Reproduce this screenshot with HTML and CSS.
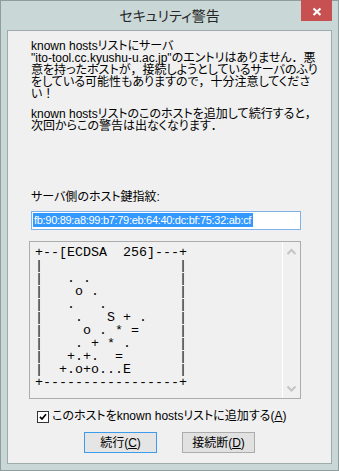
FILE: index.html
```html
<!DOCTYPE html>
<html lang="ja">
<head>
<meta charset="utf-8">
<title>セキュリティ警告</title>
<link rel="stylesheet" href="styles.css">
</head>
<body>
<div class="window">
  <div class="titlebar">
    <div class="title">セキュリティ警告</div>
    <div class="close">
      <svg width="31" height="21" viewBox="0 0 31 21"><path d="M12.5 8.5 L19.5 15 M19.5 8.5 L12.5 15" stroke="#fff" stroke-width="2.2" fill="none"/></svg>
    </div>
  </div>
  <div class="client">
    <div class="msg">
      <div class="para">
        <span class="ln">known hostsリストにサーバ</span>
        <span class="ln">"ito-tool.cc.kyushu-u.ac.jp"のエントリはありません<span class="fw">．</span>悪</span>
        <span class="ln">意を持ったホストが<span class="fw">，</span>接続しようとしているサーバのふり</span>
        <span class="ln">をしている可能性もありますので<span class="fw">，</span>十分注意してくださ</span>
        <span class="ln">い<span class="fw">！</span></span>
      </div>
      <div class="para second">
        <span class="ln">known hostsリストのこのホストを追加して続行すると<span class="fw">，</span></span>
        <span class="ln">次回からこの警告は出なくなります<span class="fw">．</span></span>
      </div>
    </div>
    <div class="label">サーバ側のホスト鍵指紋:</div>
    <div class="fp"><span class="sel">fb:90:89:a8:99:b7:79:eb:64:40:dc:bf:75:32:ab:cf</span></div>
    <div class="art">
<pre class="art-text">+--[ECDSA  256]---+
|                 |
|   . .           |
|    o .          |
|   .   .         |
|    .   S + .    |
|     o . * =     |
|    . + * .      |
|   +.+.  =       |
|  +.o+o...E      |
+-----------------+</pre>
      <div class="sb">
        <svg class="arrow" width="17" height="17" viewBox="0 0 17 17"><path d="M4.5 12 L8.5 8 L12.5 12" stroke="#c4c4c4" stroke-width="2" fill="none"/></svg>
        <svg class="arrow" width="17" height="17" viewBox="0 0 17 17"><path d="M4.5 5.5 L8.5 9.5 L12.5 5.5" stroke="#c4c4c4" stroke-width="2" fill="none"/></svg>
      </div>
    </div>
    <label class="check">
      <span class="box"><svg width="12" height="12" viewBox="0 0 12 12"><path d="M2.3 5.8 L4.8 8.4 L9.6 2.6" stroke="#000" stroke-width="2" fill="none"/></svg></span>
      <span class="check-text">このホストをknown hostsリストに追加する(<u>A</u>)</span>
    </label>
    <div class="buttons">
      <div class="btn default">続行(<u>C</u>)</div>
      <div class="btn">接続断(<u>D</u>)</div>
    </div>
  </div>
</div>
</body>
</html>
```

FILE: styles.css
```css
html, body {
  margin: 0;
  padding: 0;
}
body {
  width: 339px;
  height: 471px;
  overflow: hidden;
  font-family: "Liberation Sans", "Noto Sans CJK JP", sans-serif;
  font-size: 12px;
  color: #000;
  background: #c9d7d7;
}
.window {
  box-sizing: border-box;
  width: 339px;
  height: 471px;
  border: 1px solid #8f9d9d;
  background: #c9d7d7;
  padding: 0 6px 6px;
  display: flex;
  flex-direction: column;
}
.titlebar {
  height: 29px;
  flex: none;
  display: grid;
  grid-template-columns: 1fr auto 1fr;
  align-items: start;
}
.title {
  grid-column: 2;
  font-family: "Noto Sans CJK JP", sans-serif;
  font-feature-settings: "palt";
  font-size: 14px;
  line-height: 29px;
  color: #262626;
  white-space: nowrap;
}
.close {
  grid-column: 3;
  justify-self: end;
  width: 31px;
  height: 21px;
  margin-top: -1px;
  background: #c75050;
}
.close svg {
  display: block;
}
.client {
  flex: 1;
  border: 1px solid #9eabab;
  background: #f0f0f0;
  display: flex;
  flex-direction: column;
}
.msg {
  margin: 9px 0 0 23px;
  font-feature-settings: "palt";
}
.para .ln {
  display: block;
  height: 12px;
  line-height: 12px;
  white-space: nowrap;
}
.para.second {
  margin-top: 8px;
}
.fw {
  font-feature-settings: normal;
}
.label {
  margin: 59px 0 0 23px;
  height: 12px;
  line-height: 12px;
  font-feature-settings: "palt";
  white-space: nowrap;
}
.fp {
  box-sizing: border-box;
  margin: 8px 0 0 23px;
  width: 270px;
  height: 19px;
  border: 1px solid #7fb2e8;
  background: #fff;
  padding: 1px;
}
.sel {
  display: inline-block;
  height: 14px;
  line-height: 14px;
  background: #3399ff;
  color: #fff;
  font-size: 11px;
  letter-spacing: -0.3px;
  padding: 0 2px 0 1px;
  white-space: nowrap;
  vertical-align: top;
}
.art {
  box-sizing: border-box;
  margin: 11px 0 0 21px;
  width: 272px;
  height: 158px;
  border: 1px solid #acacac;
  background: #f0f0f0;
  display: flex;
}
.art-text {
  flex: 1;
  margin: 0;
  padding: 4px 0 0 5px;
  font-family: "Liberation Mono", monospace;
  font-size: 13.34px;
  line-height: 13px;
  color: #000;
  overflow: hidden;
}
.sb {
  width: 17px;
  border-left: 1px solid #fff;
  display: flex;
  flex-direction: column;
  justify-content: space-between;
}
.arrow {
  display: block;
}
.check {
  margin: 11px 0 0 29px;
  height: 13px;
  display: flex;
  align-items: center;
  gap: 3px;
  font-feature-settings: "palt";
  white-space: nowrap;
}
.box {
  box-sizing: border-box;
  width: 12px;
  height: 12px;
  border: 1px solid #333;
  background: #fff;
  display: flex;
  align-items: center;
  justify-content: center;
}
.box svg {
  display: block;
}
.check-text {
  line-height: 13px;
}
u {
  text-decoration: underline;
  text-underline-offset: 1px;
}
.buttons {
  margin-top: 9px;
  display: flex;
  justify-content: center;
  gap: 25px;
}
.btn {
  box-sizing: border-box;
  width: 73px;
  height: 21px;
  border: 1px solid #acacac;
  background: #e1e1e1;
  display: flex;
  align-items: center;
  justify-content: center;
  line-height: 14px;
  white-space: nowrap;
}
.btn.default {
  border-color: #3c9beb;
  background: #e5e5e5;
}
```
